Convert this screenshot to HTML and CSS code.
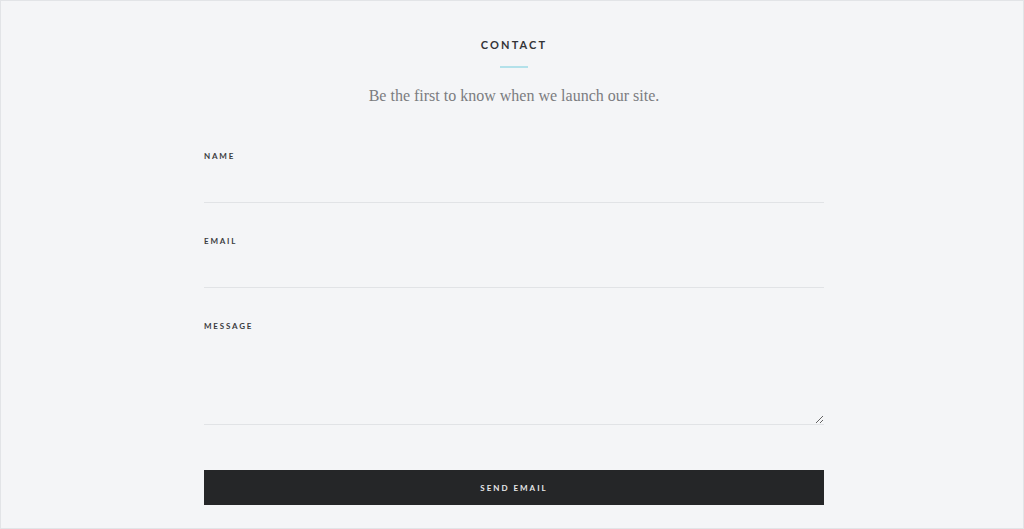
FILE: index.html
```html
<!DOCTYPE html>
<html lang="en">
<head>
  <meta charset="UTF-8">
  <title>Contact</title>
  <link rel="stylesheet" href="styles.css">
</head>
<body>
  <div class="pagina">
    <section class="contacto">
      <h2 class="titulo">CONTACT</h2>
      <div class="linea"></div>
      <p class="subtitulo">Be the first to know when we launch our site.</p>

      <form class="formulario">
        <label class="campo">
          <span class="etiqueta">NAME</span>
          <input type="text" class="entrada">
        </label>
        <label class="campo">
          <span class="etiqueta">EMAIL</span>
          <input type="email" class="entrada">
        </label>
        <label class="campo">
          <span class="etiqueta">MESSAGE</span>
          <textarea class="entrada mensaje"></textarea>
        </label>
        <button type="button" class="enviar">SEND EMAIL</button>
      </form>
    </section>
  </div>
</body>
</html>
```

FILE: styles.css
```css
html, body {
  margin: 0;
  padding: 0;
}

body {
  background-color: #f4f5f7;
  font-family: "Lato", "Open Sans", sans-serif;
}

.pagina {
  width: 1024px;
  height: 529px;
  box-sizing: border-box;
  border: 1px solid #e2e4e7;
  background-color: #f4f5f7;
  overflow: hidden;
}

.contacto {
  width: 620px;
  margin: 0 auto;
  padding: 37px 0 0 4px;
  display: flex;
  flex-direction: column;
  align-items: center;
}

.titulo {
  margin: 0;
  font-size: 11px;
  line-height: 14px;
  font-weight: 700;
  letter-spacing: 2.1px;
  color: #333437;
}

.linea {
  width: 28px;
  height: 2px;
  margin-top: 14px;
  background-color: #b3e1ea;
}

.subtitulo {
  margin: 18px 0 0;
  font-family: "Liberation Serif", "DejaVu Serif", serif;
  font-size: 16px;
  line-height: 20px;
  color: #7b7c80;
}

.formulario {
  width: 100%;
  margin-top: 45px;
  display: flex;
  flex-direction: column;
}

.campo {
  display: flex;
  flex-direction: column;
  margin-bottom: 33px;
}

.etiqueta {
  font-size: 8px;
  line-height: 10px;
  font-weight: 700;
  letter-spacing: 1.8px;
  color: #3a3b3e;
}

.entrada {
  height: 42px;
  box-sizing: border-box;
  border: none;
  border-bottom: 1px solid #e1e3e6;
  background: transparent;
  font-family: inherit;
  outline: none;
  padding: 0;
}

.mensaje {
  height: 94px;
  resize: vertical;
}

.campo:last-of-type {
  margin-bottom: 45px;
}

.enviar {
  height: 35px;
  border: none;
  background-color: #252628;
  color: #e8e8ea;
  font-family: inherit;
  font-size: 8px;
  font-weight: 700;
  letter-spacing: 2px;
  cursor: pointer;
}
```
